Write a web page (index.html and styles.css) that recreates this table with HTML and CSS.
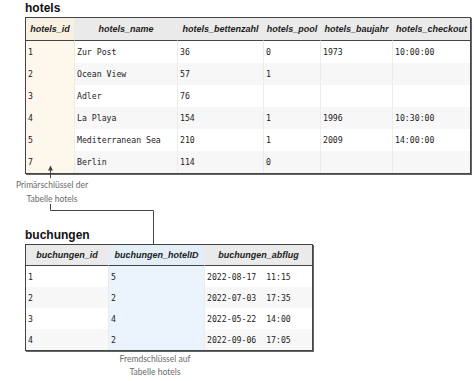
FILE: index.html
```html
<!DOCTYPE html>
<html>
<head>
<meta charset="utf-8">
<link rel="stylesheet" href="styles.css">
</head>
<body>
<div class="page">
  <h2 class="title">hotels</h2>
  <table class="db hotels">
    <colgroup>
      <col style="width:48px"><col style="width:103px"><col style="width:86px"><col style="width:57px"><col style="width:72px"><col style="width:78px">
    </colgroup>
    <thead>
      <tr><th class="key">hotels_id</th><th>hotels_name</th><th>hotels_bettenzahl</th><th>hotels_pool</th><th>hotels_baujahr</th><th>hotels_checkout</th></tr>
    </thead>
    <tbody>
      <tr><td class="key">1</td><td>Zur Post</td><td>36</td><td>0</td><td>1973</td><td>10:00:00</td></tr>
      <tr><td class="key">2</td><td>Ocean View</td><td>57</td><td>1</td><td></td><td></td></tr>
      <tr><td class="key">3</td><td>Adler</td><td>76</td><td></td><td></td><td></td></tr>
      <tr><td class="key">4</td><td>La Playa</td><td>154</td><td>1</td><td>1996</td><td>10:30:00</td></tr>
      <tr><td class="key">5</td><td>Mediterranean Sea</td><td>210</td><td>1</td><td>2009</td><td>14:00:00</td></tr>
      <tr><td class="key">7</td><td>Berlin</td><td>114</td><td>0</td><td></td><td></td></tr>
    </tbody>
  </table>

  <p class="note note-pk">Primärschlüssel der<br>Tabelle hotels</p>

  <h2 class="title title-b">buchungen</h2>
  <table class="db buchungen">
    <colgroup>
      <col style="width:82px"><col style="width:96px"><col style="width:108px">
    </colgroup>
    <thead>
      <tr><th>buchungen_id</th><th class="fk">buchungen_hotelID</th><th>buchungen_abflug</th></tr>
    </thead>
    <tbody>
      <tr><td>1</td><td class="fk">5</td><td class="pre">2022-08-17  11:15</td></tr>
      <tr><td>2</td><td class="fk">2</td><td class="pre">2022-07-03  17:35</td></tr>
      <tr><td>3</td><td class="fk">4</td><td class="pre">2022-05-22  14:00</td></tr>
      <tr><td>4</td><td class="fk">2</td><td class="pre">2022-09-06  17:05</td></tr>
    </tbody>
  </table>

  <p class="note note-fk">Fremdschlüssel auf<br>Tabelle hotels</p>

  <svg class="links" width="474" height="381" viewBox="0 0 474 381">
    <path d="M50.5 178 V169" fill="none" stroke="#444" stroke-width="1"/>
    <path d="M48 170.5 L50.5 165.5 L53 170.5 Z" fill="#444"/>
    <path d="M50.5 204 V210.5 H153.5 V244" fill="none" stroke="#444" stroke-width="1"/>
  </svg>
</div>
</body>
</html>
```
FILE: styles.css
```css
html, body {
  margin: 0;
  padding: 0;
  background: #fff;
}

.page {
  position: relative;
  width: 474px;
  height: 381px;
  padding-left: 25px;
  box-sizing: border-box;
  font-family: "Liberation Sans", Arial, sans-serif;
  color: #222;
}

.title {
  margin: 0;
  font-size: 12px;
  font-weight: bold;
  line-height: 17px;
  height: 17px;
  color: #111;
}

.title-b {
  margin-top: 21px;
}

.db {
  border-collapse: separate;
  border-spacing: 0;
  table-layout: fixed;
  border: 1px solid #444;
  box-shadow: 1px 1px 0 #666;
}

.hotels { width: 444px; }
.buchungen { width: 286px; }

.db th {
  background: #eaeaea;
  font-size: 9px;
  font-weight: bold;
  font-style: italic;
  text-align: center;
  height: 22px;
  padding: 0;
  border-bottom: 1px solid #444;
  white-space: nowrap;
  overflow: hidden;
}

.buchungen th { height: 20px; }

.db td {
  font-family: "DejaVu Sans Mono", "Liberation Mono", monospace;
  font-size: 8.2px;
  color: #222;
  height: 22px;
  padding: 0 2px;
  vertical-align: middle;
  white-space: nowrap;
  overflow: hidden;
}

.buchungen td { height: 21px; }

.db th + th,
.db td + td {
  border-left: 1px solid #ebebeb;
}

.db tbody tr:nth-child(even) td {
  background: #f7f7f7;
}

.db th.key { background: #f8f0e0; }
.db tbody tr td.key { background: #fdf7ec; }

.db th.fk { background: #e4eef9; }
.db tbody tr td.fk { background: #ebf4fd; }

.db td.pre { white-space: pre; }

.note {
  margin: 0;
  font-family: "Lato", "DejaVu Sans", sans-serif;
  font-size: 8.5px;
  color: #6a6a6a;
  text-align: center;
  white-space: nowrap;
}

.note-pk {
  margin-top: 4px;
  margin-left: -23px;
  width: 100px;
  line-height: 14px;
}

.note-fk {
  margin-top: 2px;
  margin-left: 82px;
  width: 96px;
  line-height: 13px;
}

.links {
  position: absolute;
  left: 0;
  top: 0;
  pointer-events: none;
}
```
